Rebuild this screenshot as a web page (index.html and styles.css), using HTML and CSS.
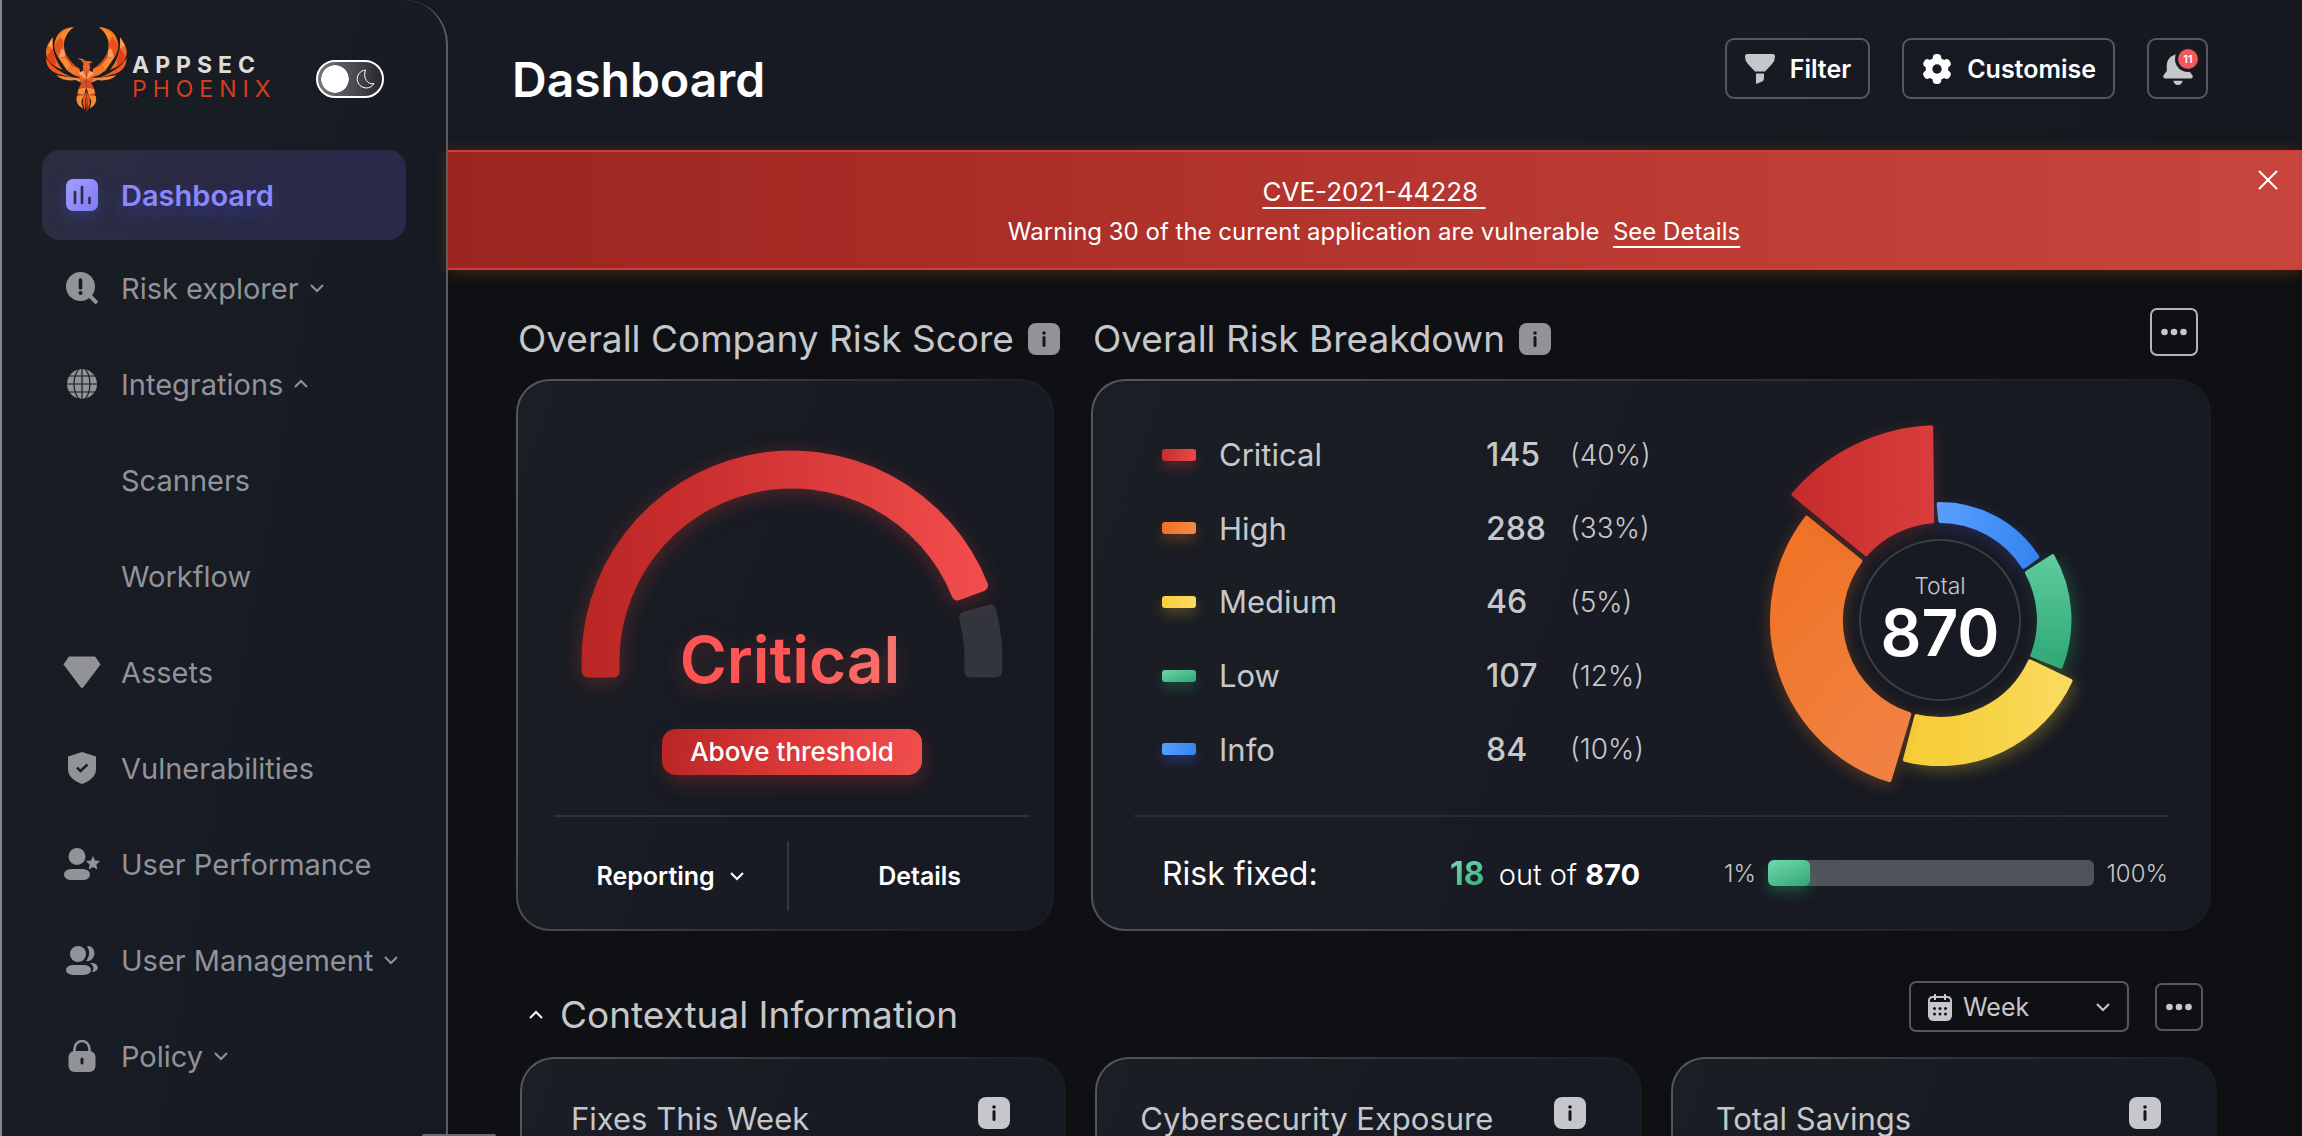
FILE: index.html
```html
<!DOCTYPE html>
<html lang="en">
<head>
  <meta charset="UTF-8" />
  <meta name="viewport" content="width=device-width, initial-scale=1.0"/>
  <title>Dashboard - AppSec Phoenix</title>
  <link rel="stylesheet" href="styles.css">
</head>
<body>

<!-- shared icons -->
<svg class="sprite" aria-hidden="true">
  <defs>
    <symbol id="chev-down" viewBox="0 0 16 16"><path d="M2 5l6 6 6-6" fill="none" stroke="currentColor" stroke-width="2"/></symbol>
    <symbol id="chev-up" viewBox="0 0 16 16"><path d="M2 11l6-6 6 6" fill="none" stroke="currentColor" stroke-width="2"/></symbol>
    <symbol id="info" viewBox="0 0 32 32">
      <rect width="32" height="32" rx="8" fill="currentColor"/>
      <circle cx="16" cy="10" r="1.8" fill="#15171c"/>
      <path d="M16 14.500v8" stroke="#15171c" stroke-width="3" stroke-linecap="round"/>
    </symbol>
    <symbol id="dots" viewBox="0 0 28 8">
      <g fill="currentColor"><circle cx="4.500" cy="4" r="3.300"/><circle cx="14" cy="4" r="3.300"/><circle cx="23.500" cy="4" r="3.300"/></g>
    </symbol>
  </defs>
</svg>

<div class="app">
  <!-- sidebar -->
  <aside class="sidebar">
    <div class="brand">
      <svg class="bird" viewBox="0 0 270 300" aria-hidden="true">
        <defs>
          <g id="wing">
            <path fill="#f47b20" d="M95 34C62 34 40 54 37 88C38 104 43 116 50 126L68 104C62 76 70 52 95 34Z"/>
            <path fill="#f98a2e" d="M95 34C76 38 62 48 55 62L68 70C74 54 82 42 95 34Z"/>
            <path fill="#e8501f" d="M37 88L55 62L66 84L50 126C43 116 38 104 37 88Z"/>
            <path fill="#fb9e62" d="M50 126L57 98L68 104L70 124Z"/>
            <path fill="#f26a21" d="M32 64C14 86 8 108 14 122C22 142 40 152 62 162C42 136 28 104 32 64Z"/>
            <path fill="#ffa04a" d="M32 64L18 88L31 98Z"/>
            <path fill="#e2401c" d="M14 122L31 98L42 134L40 150C28 144 18 136 14 122Z"/>
            <path fill="#ef5a20" d="M12 126C12 150 24 166 48 174L96 186C62 172 28 154 12 126Z"/>
            <path fill="#fb8b33" d="M50 126L70 124L88 146L76 164Z"/>
            <path fill="#e5481d" d="M70 124L68 104C74 122 86 138 104 152L88 146Z"/>
            <path fill="#f6752b" d="M76 164L88 146L112 158L120 186L94 176Z"/>
            <path fill="#d93b1b" d="M88 146L104 152L124 164L112 158Z"/>
            <path fill="#f58a3c" d="M42 178C58 192 80 196 100 192L118 200L112 186L84 184Z"/>
          </g>
          <g id="bodyHalf">
            <path fill="#f0602a" d="M133 146L122 150L124 164L108 172L118 200L133 190Z"/>
            <path fill="#ffa468" d="M124 164L133 190L108 172Z"/>
            <path fill="#e04a1d" d="M118 200L133 190V214L110 218Z"/>
            <path fill="#fa8a3d" d="M110 218L133 214L126 238L106 232Z"/>
            <path fill="#d94c1a" d="M106 232L126 238L133 226V248L108 246Z"/>
            <path fill="#f98a2e" d="M105 240L124 238L118 258L123 278C106 268 100 254 105 240Z"/>
            <path fill="#e8531d" d="M124 240L131 238L129 284L122 262Z"/>
          </g>
        </defs>
        <use href="#wing"/><use href="#wing" transform="translate(266 0) scale(-1 1)"/>
        <use href="#bodyHalf"/><use href="#bodyHalf" transform="translate(266 0) scale(-1 1)"/>
        <path fill="#f0602a" d="M124 150V140L118 137L124 134L146 136L152 141L142 142L145 156L133 164Z"/>
        <path fill="#c98a3a" d="M106 127L122 129L130 134L120 134Z"/>
        <path fill="#e8531d" d="M131 250H135L133 294Z"/>
      </svg>
      <div class="brand-name"><strong>APPSEC</strong><span>PHOENIX</span></div>
      <label class="theme">
        <input type="checkbox" aria-label="Dark mode">
        <svg viewBox="0 0 20 20" aria-hidden="true"><path d="M10.500 1A9 9 0 1 0 19 14.500C13 16.500 7.500 9 10.500 1Z" fill="none" stroke="#fff" stroke-width="1"/></svg>
      </label>
    </div>

    <nav class="nav">
      <a class="active" href="#">
        <svg viewBox="0 0 32 32"><defs><linearGradient id="violet" x1="0" y1="0" x2="1" y2="1"><stop offset="0" stop-color="#a09dff"/><stop offset="1" stop-color="#7f7bf5"/></linearGradient></defs><rect width="32" height="32" rx="7" fill="url(#violet)"/><path d="M9 13v11M16 8v16M23.500 19v5" stroke="#2b2b45" stroke-width="2.600" stroke-linecap="round"/></svg>
        <span>Dashboard</span>
      </a>
      <a href="#">
        <svg viewBox="0 0 32 32"><circle cx="14.500" cy="14.500" r="14.500"/><path d="M23 23l8 8" stroke="#929399" stroke-width="4"/><path d="M14.500 8v8" stroke="#191c24" stroke-width="3.600" stroke-linecap="round"/><circle cx="14.500" cy="21" r="2" fill="#191c24"/></svg>
        <span>Risk explorer</span><svg class="chev"><use href="#chev-down"/></svg>
      </a>
      <a href="#">
        <svg viewBox="0 0 32 32"><circle cx="16" cy="16" r="15"/><g fill="none" stroke="#191c24" stroke-width="1.200"><ellipse cx="16" cy="16" rx="8" ry="16"/><path d="M16 0v32M0 16h32M2 8h28M2 24h28"/></g></svg>
        <span>Integrations</span><svg class="chev"><use href="#chev-up"/></svg>
      </a>
      <a class="sub" href="#"><span>Scanners</span></a>
      <a class="sub" href="#"><span>Workflow</span></a>
      <a href="#">
        <svg class="wide" viewBox="0 0 38 32"><path d="M6 1H32L37 8.500L20 31Q19 32 18 31L1 8.500Z" stroke="#929399" stroke-linejoin="round"/></svg>
        <span>Assets</span>
      </a>
      <a href="#">
        <svg viewBox="0 0 32 32"><path d="M16 0L30 4.500V17C30 25 23 29.500 16 32C9 29.500 2 25 2 17V4.500Z"/><path d="M11 15.500l3.500 3.500 7-6.500" fill="none" stroke="#191c24" stroke-width="2.400"/></svg>
        <span>Vulnerabilities</span>
      </a>
      <a href="#">
        <svg class="wide" viewBox="0 0 38 32"><circle cx="14" cy="8.500" r="8.500"/><rect x="1" y="21" width="26" height="11" rx="7" ry="5.500"/><path d="M30 8l2.100 4.500 4.900.6-3.600 3.400.9 4.900-4.300-2.400-4.300 2.400.9-4.900-3.600-3.400 4.900-.6z"/></svg>
        <span>User Performance</span>
      </a>
      <a href="#">
        <svg viewBox="0 0 32 32"><circle cx="12" cy="10" r="8"/><rect x="0" y="21" width="25" height="10" rx="7" ry="5"/><path d="M21 2C31 1 31 18 20 17C24 12 24 7 21 2ZM24 19C34 18 34 28 26 28C29 24 27 21 24 19Z"/></svg>
        <span>User Management</span><svg class="chev"><use href="#chev-down"/></svg>
      </a>
      <a href="#">
        <svg viewBox="0 0 32 32"><path d="M8.500 14V9a7.500 8 0 0 1 15 0v5" fill="none" stroke="#929399" stroke-width="2.600"/><rect x="2.500" y="11" width="27" height="21" rx="6"/><path d="M16 19v4" stroke="#191c24" stroke-width="3" stroke-linecap="round"/></svg>
        <span>Policy</span><svg class="chev"><use href="#chev-down"/></svg>
      </a>
    </nav>
  </aside>

  <main class="main">
    <header class="topbar">
      <h1>Dashboard</h1>
      <div class="actions">
        <button class="btn" type="button">
          <svg viewBox="0 0 30 30" fill="#c6c7ca"><path d="M2 0H28Q30 0 30 3Q30 7 27 10L20 17.500H10L3 10Q0 7 0 3Q0 0 2 0ZM11 19.500H19V24Q19 27 16 28L11 30Z"/></svg>
          Filter
        </button>
        <button class="btn" type="button">
          <svg viewBox="0 0 32 32"><g fill="#fff"><circle cx="16" cy="16" r="12"/><g id="teeth"><rect x="11.500" y="0" width="9" height="32" rx="4"/></g><use href="#teeth" transform="rotate(60 16 16)"/><use href="#teeth" transform="rotate(120 16 16)"/></g><circle cx="16" cy="16" r="5" fill="#181b23"/></svg>
          Customise
        </button>
        <button class="btn bell" type="button" aria-label="Notifications">
          <svg viewBox="0 0 32 34" fill="#c6c7ca"><path d="M16 1C8 2 4 7 4 14V19L.5 24Q-.5 27 2.500 27H29.500Q32.500 27 31.500 24L28 19V14C28 7 24 2 16 1ZM11 29.500H21Q20 34 16 34Q12 34 11 29.500Z"/></svg>
          <span class="badge">11</span>
        </button>
      </div>
    </header>

    <div class="alert">
      <p class="cve"><a href="#">CVE-2021-44228&nbsp;</a></p>
      <p>Warning 30 of the current application are vulnerable &nbsp;<a href="#">See Details</a></p>
      <button class="close" type="button" aria-label="Close">
        <svg viewBox="0 0 20 20"><path d="M1 1l18 18M19 1L1 19" stroke="#fff" stroke-width="2"/></svg>
      </button>
    </div>

    <section class="overview">
      <div class="panel">
        <div class="panel-head">
          <h2>Overall Company Risk Score</h2>
          <svg class="info"><use href="#info"/></svg>
        </div>
        <div class="card score">
          <svg class="gauge" viewBox="0 0 440 250" role="img" aria-label="Risk score: Critical">
            <defs>
              <linearGradient id="red" x1="0" y1="0" x2="1" y2="0"><stop offset="0" stop-color="#b92724"/><stop offset=".3" stop-color="#cb2f2f"/><stop offset="1" stop-color="#f24d4c"/></linearGradient>
              <linearGradient id="redText" x1="0" y1="0" x2="1" y2="0"><stop offset="0" stop-color="#ff5252"/><stop offset=".6" stop-color="#ff5a58"/><stop offset="1" stop-color="#f37770"/></linearGradient>
            </defs>
            <path class="arc-rest" d="M418.200 169.500A204.500 204.500 0 0 1 424.200 230.500H398.200A178.500 178.500 0 0 0 393.100 176.500Z"/>
            <path class="arc-value" d="M15.800 230.500A204.500 204.500 0 0 1 410 144.400L385.600 153.400A178.500 178.500 0 0 0 41.800 230.500Z"/>
            <text class="gauge-text" x="218" y="242">Critical</text>
          </svg>
          <span class="pill">Above threshold</span>
          <div class="score-foot">
            <button type="button">Reporting <svg class="chev"><use href="#chev-down"/></svg></button>
            <button type="button">Details</button>
          </div>
        </div>
      </div>

      <div class="panel">
        <div class="panel-head">
          <h2>Overall Risk Breakdown</h2>
          <svg class="info"><use href="#info"/></svg>
          <button class="more bright" type="button" aria-label="More"><svg><use href="#dots"/></svg></button>
        </div>
        <div class="card breakdown">
          <div class="breakdown-body">
            <table class="levels">
              <tbody>
                <tr><th scope="row"><span class="level"><i class="swatch critical"></i>Critical</span></th><td class="count">145</td><td class="pct">(40%)</td></tr>
                <tr><th scope="row"><span class="level"><i class="swatch high"></i>High</span></th><td class="count">288</td><td class="pct">(33%)</td></tr>
                <tr><th scope="row"><span class="level"><i class="swatch medium"></i>Medium</span></th><td class="count">46</td><td class="pct">(5%)</td></tr>
                <tr><th scope="row"><span class="level"><i class="swatch low"></i>Low</span></th><td class="count">107</td><td class="pct">(12%)</td></tr>
                <tr><th scope="row"><span class="level"><i class="swatch blue"></i>Info</span></th><td class="count">84</td><td class="pct">(10%)</td></tr>
              </tbody>
            </table>
            <svg class="rose" viewBox="0 0 400 390" role="img" aria-label="Total 870">
              <defs>
                <linearGradient id="s-red"><stop offset="0" stop-color="#c42c2b"/><stop offset="1" stop-color="#d93d3b"/></linearGradient>
                <linearGradient id="s-orange" x1="0" y1="0" x2=".6" y2="1"><stop offset="0" stop-color="#f07122"/><stop offset="1" stop-color="#f18142"/></linearGradient>
                <linearGradient id="s-yellow"><stop offset=".3" stop-color="#f6cf3b"/><stop offset="1" stop-color="#fadb61"/></linearGradient>
                <linearGradient id="s-green" x1="0" y1="0" x2="0" y2="1"><stop offset="0" stop-color="#5fcb9b"/><stop offset="1" stop-color="#2ea878"/></linearGradient>
                <linearGradient id="s-blue"><stop offset="0" stop-color="#58a0ff"/><stop offset="1" stop-color="#3583f0"/></linearGradient>
              </defs>
              <g class="slices">
                <path class="slice-blue" fill="url(#s-blue)" stroke="url(#s-blue)" d="M198.600 84A116 116 0 0 1 297.300 136.800L283.500 146.800A99 99 0 0 0 200.300 101Z"/>
                <path class="slice-green" fill="url(#s-green)" stroke="url(#s-green)" d="M312.700 136.200A129.500 129.500 0 0 1 320.800 246.600L292.400 235.500A99 99 0 0 0 287 152.800Z"/>
                <path class="slice-yellow" fill="url(#s-yellow)" stroke="url(#s-yellow)" d="M330.500 260.900A144 144 0 0 1 164.900 339.700L176.400 296.100A99 99 0 0 0 289.900 241.400Z"/>
                <path class="slice-orange" fill="url(#s-orange)" stroke="url(#s-orange)" d="M149.500 360.200A168 168 0 0 1 66.700 97.700L120.400 141.100A99 99 0 0 0 169.400 294.200Z"/>
                <path class="slice-red" fill="url(#s-red)" stroke="url(#s-red)" d="M53.500 74.400A193 193 0 0 1 191.200 7.200L192.200 101.300A99 99 0 0 0 126.100 134.100Z"/>
              </g>
              <circle cx="200" cy="200" r="80" fill="none" stroke="#3a3d44" stroke-width="2"/>
              <text class="rose-label" x="200" y="174">Total</text>
              <text class="rose-total" x="200" y="236">870</text>
            </svg>
          </div>
          <div class="fixed-row">
            <span class="fixed-label">Risk fixed:</span>
            <span class="fixed-count"><b class="done">18</b> <span>out of <b>870</b></span></span>
            <div class="meter">
              <span>1%</span>
              <div class="track" role="progressbar" aria-label="Risk fixed" aria-valuenow="1"><div class="fill" style="width:13%"></div></div>
              <span>100%</span>
            </div>
          </div>
        </div>
      </div>
    </section>

    <section class="context">
      <div class="context-head">
        <svg class="chev"><use href="#chev-up"/></svg>
        <h2>Contextual Information</h2>
        <label class="period">
          <svg class="cal" viewBox="0 0 26 28"><path fill="#c6c7ca" d="M1 9H25V22Q25 28 19 28H7Q1 28 1 22Z"/><path d="M2 10V8Q2 4 6 4H20Q24 4 24 8V10M8 1V7M18 1V7" fill="none" stroke="#c6c7ca" stroke-width="2"/><g fill="#111216"><circle cx="7.500" cy="15.500" r="1.500"/><circle cx="13" cy="15.500" r="1.500"/><circle cx="18.500" cy="15.500" r="1.500"/><circle cx="7.500" cy="21" r="1.500"/><circle cx="13" cy="21" r="1.500"/><circle cx="18.500" cy="21" r="1.500"/></g></svg>
          <select aria-label="Period"><option>Week</option><option>Month</option><option>Year</option></select>
          <svg class="chev"><use href="#chev-down"/></svg>
        </label>
        <button class="more" type="button" aria-label="More"><svg><use href="#dots"/></svg></button>
      </div>
      <div class="context-cards">
        <div class="card mini"><h3>Fixes This Week</h3><svg class="info"><use href="#info"/></svg></div>
        <div class="card mini"><h3>Cybersecurity Exposure</h3><svg class="info"><use href="#info"/></svg></div>
        <div class="card mini"><h3>Total Savings</h3><svg class="info"><use href="#info"/></svg></div>
      </div>
    </section>
  </main>
</div>

<div class="dock-hint"></div>

</body>
</html>
```
FILE: styles.css
```css
* {
  margin: 0;
  padding: 0;
  box-sizing: border-box;
}
body {
  background: #0f1013;
  color: #fff;
  font-family: Inter, "Liberation Sans", sans-serif;
  font-size: 25px;
  height: 100vh;
  overflow: hidden;
}
button, select {
  font: inherit;
  color: inherit;
  background: none;
  border: none;
  cursor: pointer;
}
a {
  color: inherit;
}
.sprite {
  position: absolute;
  width: 0;
  height: 0;
}
.chev {
  width: 16px;
  height: 16px;
  flex: none;
}
.app {
  display: grid;
  grid-template-columns: 448px 1fr;
  height: 100vh;
  background: #161920;
}

/* sidebar */
.sidebar {
  background: linear-gradient(100deg, #1a1d23, #171b23 60%, #161921);
  border-left: 2px solid #83868d;
  border-right: 2px solid #5a5c62;
  border-radius: 0 44px 0 0;
  padding: 0 40px;
  overflow: hidden;
}
.brand {
  height: 150px;
  display: flex;
  align-items: center;
  padding-bottom: 18px;
}
.bird {
  width: 90px;
  height: 100px;
  flex: none;
}
.brand-name {
  display: flex;
  flex-direction: column;
  font-size: 23px;
  line-height: 24px;
  letter-spacing: 6px;
  margin-top: 22px;
}
.brand-name strong {
  color: #dcdcd8;
}
.brand-name span {
  color: #d63d20;
}
.theme {
  display: flex;
  position: relative;
  margin-left: auto;
  margin-right: 22px;
  margin-top: 26px;
}
.theme input {
  appearance: none;
  width: 68px;
  height: 38px;
  border: 2px solid #fff;
  border-radius: 19px;
  background: radial-gradient(circle 14px at 17px 17px, #fff 96%, transparent), linear-gradient(90deg, #77787d, #26282e);
}
.theme svg {
  position: absolute;
  right: 9px;
  top: 9px;
  width: 20px;
  height: 20px;
}
.nav {
  display: flex;
  flex-direction: column;
}
.nav a {
  height: 96px;
  display: flex;
  align-items: center;
  padding-left: 24px;
  border-radius: 18px;
  text-decoration: none;
  font-size: 29px;
  font-weight: 400;
  color: #929399;
  fill: #929399;
  white-space: nowrap;
}
.nav a > svg:first-child {
  width: 32px;
  height: 32px;
  margin-right: 23px;
  flex: none;
}
.nav a > svg.wide:first-child {
  width: 38px;
  margin: 0 20px 0 -3px;
}
.nav .chev {
  margin-left: 10px;
}
.nav .sub {
  padding-left: 79px;
}
.nav .active {
  height: 90px;
  background: linear-gradient(100deg, #2c2c41, #29294a);
  color: #8b88ff;
  font-weight: 600;
  text-shadow: 0 8px 16px rgba(70, 90, 255, 0.35);
}
.nav .active svg {
  filter: drop-shadow(0 6px 8px rgba(60, 90, 220, 0.3));
}

/* top bar */
.main {
  background: #0f1013;
  min-width: 0;
}
.topbar {
  height: 150px;
  background: linear-gradient(90deg, #171a22, #181b23 60%, #15181f);
  padding: 38px 94px 0 64px;
  display: flex;
  justify-content: space-between;
  align-items: flex-start;
}
h1 {
  font-size: 48px;
  line-height: 84px;
  font-weight: 600;
}
.actions {
  display: flex;
  gap: 32px;
}
.btn {
  height: 61px;
  padding: 0 17px 0 18px;
  display: flex;
  align-items: center;
  gap: 15px;
  border: 2px solid #56585e;
  border-radius: 9px;
  font-weight: 600;
}
.btn svg {
  width: 30px;
  height: 32px;
}
.btn.bell {
  position: relative;
  width: 61px;
  padding: 0;
  justify-content: center;
}
.badge {
  position: absolute;
  top: 9px;
  right: 8px;
  width: 20px;
  height: 20px;
  border-radius: 50%;
  background: #f4585a;
  box-shadow: 0 0 0 3px #181b23;
  font-size: 11px;
  line-height: 20px;
  text-align: center;
}

/* warning banner */
.alert {
  position: relative;
  height: 120px;
  padding-top: 3px;
  background: linear-gradient(90deg, #9c2521, #a82c26 25%, #bb3b33 65%, #c8453d);
  border: 2px solid #cf3c3a;
  border-left: none;
  box-shadow: 0 2px 14px rgba(190, 90, 20, 0.35);
  display: flex;
  flex-direction: column;
  align-items: center;
  justify-content: center;
  font-size: 24px;
  line-height: 40px;
}
.alert .cve {
  font-size: 26px;
}
.alert a {
  text-underline-offset: 6px;
  text-decoration-thickness: 2px;
}
.close {
  position: absolute;
  top: 18px;
  right: 22px;
}
.close svg {
  display: block;
  width: 20px;
  height: 20px;
}

/* cards */
.card {
  border: 2px solid transparent;
  border-radius: 34px;
  background:
    linear-gradient(110deg, #1b1e24, #181b23 45%, #161921) padding-box,
    linear-gradient(100deg, #56585b, #303238 50%, #1a1c22 90%) border-box;
}
h2 {
  font-size: 37px;
  line-height: 46px;
  font-weight: 400;
  color: #c6c7ca;
  white-space: nowrap;
}
.info {
  width: 32px;
  height: 32px;
  flex: none;
  color: #929399;
}
.more {
  width: 48px;
  height: 48px;
  border: 2px solid #56585e;
  border-radius: 7px;
  color: #c6c7ca;
  display: flex;
  align-items: center;
  justify-content: center;
}
.more.bright {
  border-color: #b4b5b8;
  align-self: flex-start;
  margin-left: auto;
  margin-right: 13px;
}
.more svg {
  width: 28px;
  height: 8px;
}
.overview {
  display: grid;
  grid-template-columns: 538fr 1120fr;
  gap: 37px;
  padding: 38px 91px 0 68px;
}
.panel {
  min-width: 0;
}
.panel-head {
  height: 62px;
  margin-bottom: 9px;
  padding-left: 2px;
  display: flex;
  align-items: center;
  gap: 14px;
}
.score {
  height: 552px;
  padding: 60px 22px 0 36px;
  display: flex;
  flex-direction: column;
  align-items: center;
}
.gauge {
  width: 440px;
  max-width: 100%;
  overflow: visible;
}
.arc-value, .arc-rest {
  stroke-width: 12;
  stroke-linejoin: round;
}
.arc-value {
  fill: url(#red);
  stroke: url(#red);
  filter: drop-shadow(0 4px 10px rgba(230, 60, 60, 0.3));
}
.arc-rest {
  fill: #33353d;
  stroke: #33353d;
}
.gauge-text {
  fill: url(#redText);
  font-size: 64px;
  font-weight: 600;
  text-anchor: middle;
  filter: drop-shadow(0 6px 10px rgba(255, 80, 80, 0.25));
}
.pill {
  margin: 38px 0 40px;
  padding: 0 28px;
  font-size: 26px;
  line-height: 46px;
  border-radius: 14px;
  font-weight: 500;
  background: linear-gradient(100deg, #b92625, #dc3838 50%, #f14f4e);
  box-shadow: 3px 8px 18px rgba(220, 60, 60, 0.25);
}
.score-foot {
  width: 100%;
  height: 96px;
  padding-top: 24px;
  border-top: 2px solid #2f3138;
  display: grid;
  grid-template-columns: 49fr 51fr;
}
.score-foot button {
  font-weight: 600;
  display: flex;
  align-items: center;
  justify-content: center;
  gap: 14px;
}
.score-foot button + button {
  border-left: 2px solid #33353b;
  padding-left: 20px;
}

/* risk breakdown */
.breakdown {
  height: 552px;
  padding: 0 41px;
}
.breakdown-body {
  height: 434px;
  padding: 0 28px;
  display: flex;
  justify-content: space-between;
  align-items: flex-start;
}
.levels {
  border-collapse: collapse;
  margin-top: 37px;
  height: 368px;
  color: #c6c7ca;
  font-size: 32px;
}
.levels th {
  width: 324px;
  font-size: 31px;
  font-weight: 400;
}
.level {
  display: flex;
  align-items: center;
  gap: 23px;
}
.levels .count {
  width: 84px;
  font-weight: 500;
}
.levels .pct {
  font-size: 28px;
  font-weight: 300;
}
.swatch {
  width: 34px;
  height: 12px;
  border-radius: 3px;
}
.critical {
  background: linear-gradient(100deg, #c42c2b, #ee4b4a);
  box-shadow: 0 6px 12px rgba(230, 60, 60, 0.3);
}
.high {
  background: linear-gradient(100deg, #f07122, #f48a4c);
  box-shadow: 0 6px 12px rgba(240, 113, 34, 0.3);
}
.medium {
  background: linear-gradient(100deg, #f6cf3b, #fadb61);
  box-shadow: 0 6px 12px rgba(246, 207, 59, 0.25);
}
.low {
  background: linear-gradient(160deg, #6dd4a6, #2ea878);
  box-shadow: 0 6px 12px rgba(46, 168, 120, 0.3);
}
.blue {
  background: linear-gradient(100deg, #58a0ff, #3583f0);
  box-shadow: 0 6px 12px rgba(70, 90, 240, 0.35);
}
.rose {
  width: 400px;
  height: 390px;
  margin-top: 39px;
  overflow: visible;
}
.slices path {
  stroke-width: 4;
  stroke-linejoin: round;
}
.slice-red { filter: drop-shadow(0 4px 8px rgba(220, 60, 60, 0.25)); }
.slice-orange { filter: drop-shadow(0 4px 8px rgba(240, 113, 34, 0.3)); }
.slice-yellow { filter: drop-shadow(4px 4px 8px rgba(246, 207, 59, 0.3)); }
.slice-green { filter: drop-shadow(4px 4px 8px rgba(46, 168, 120, 0.3)); }
.slice-blue { filter: drop-shadow(0 4px 8px rgba(70, 90, 240, 0.25)); }
.rose text {
  text-anchor: middle;
}
.rose-label {
  font-size: 23px;
  font-weight: 300;
  fill: #c6c7ca;
}
.rose-total {
  font-size: 64px;
  font-weight: 600;
  fill: #fff;
}
.fixed-row {
  border-top: 2px solid #2b2d33;
  padding-left: 28px;
  height: 114px;
  display: grid;
  grid-template-columns: 288px 274px 1fr;
  align-items: center;
}
.fixed-label {
  font-size: 32px;
}
.fixed-count {
  font-size: 29px;
  font-weight: 300;
}
.fixed-count b {
  font-weight: 700;
}
.fixed-count .done {
  font-size: 32px;
  margin-right: 6px;
  background: linear-gradient(150deg, #7fdcb2, #2ea878);
  background-clip: text;
  color: transparent;
}
.meter {
  display: flex;
  align-items: center;
  gap: 12px;
  font-size: 24px;
  color: #c6c7ca;
  font-weight: 300;
}
.track {
  flex: 1;
  height: 26px;
  border-radius: 6px;
  background: #505259;
}
.fill {
  height: 100%;
  border-radius: 6px;
  background: linear-gradient(155deg, #74d8ac, #2ea878);
  box-shadow: 0 6px 14px rgba(46, 168, 120, 0.35);
}

/* contextual information */
.context {
  padding: 50px 85px 0 72px;
}
.context-head {
  height: 51px;
  margin-bottom: 25px;
  display: flex;
  align-items: center;
}
.context-head > .chev {
  margin: 16px 16px 0 8px;
}
.context-head h2 {
  margin-top: 16px;
  margin-right: auto;
}
.period {
  width: 220px;
  height: 51px;
  padding: 0 16px;
  display: flex;
  align-items: center;
  gap: 10px;
  border: 2px solid #56585e;
  border-radius: 7px;
  margin-right: 26px;
  color: #c6c7ca;
}
.period select {
  appearance: none;
  flex: 1;
  min-width: 0;
}
.cal {
  width: 26px;
  height: 28px;
}
.context-head .more {
  margin-right: 14px;
}
.context-cards {
  display: grid;
  grid-template-columns: repeat(3, 1fr);
  gap: 29px;
}
.mini {
  height: 320px;
  padding: 38px 54px 0 43px;
  display: flex;
  justify-content: space-between;
  align-items: flex-start;
}
.mini:first-child {
  padding-left: 49px;
}
.mini h3 {
  font-size: 31px;
  line-height: 44px;
  font-weight: 400;
  color: #c6c7ca;
  white-space: nowrap;
}
.mini .info {
  color: #c6c7ca;
}

/* sliver of the tray peeking in at the bottom edge */
.dock-hint {
  position: fixed;
  left: 422px;
  bottom: 0;
  width: 74px;
  height: 2px;
  border-radius: 4px 4px 0 0;
  background: #6d6673;
}
```
